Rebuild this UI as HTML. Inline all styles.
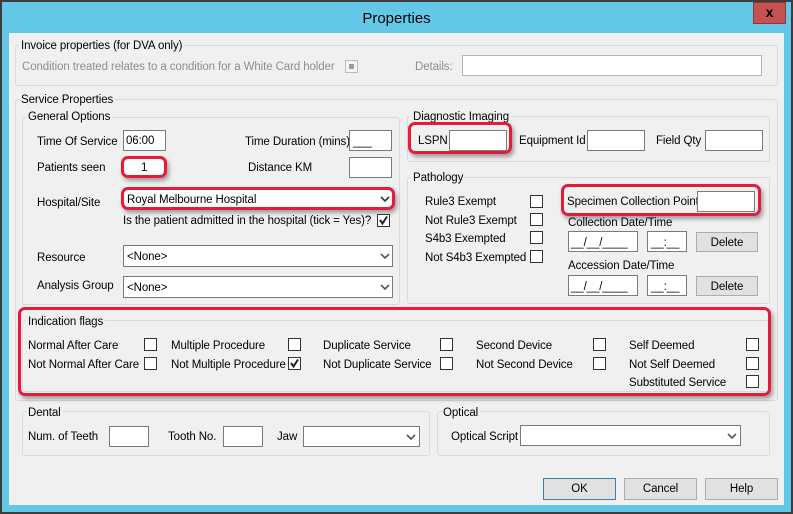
<!DOCTYPE html>
<html><head><meta charset="utf-8"><style>
*{margin:0;padding:0;box-sizing:border-box}
body{width:793px;height:514px;background:#3c3c3c;font-family:"Liberation Sans",sans-serif;font-size:11.5px;letter-spacing:-0.1px;color:#000;position:relative;overflow:hidden}
div{position:absolute}
.t{line-height:14px;white-space:nowrap;margin-top:1px}
.gray{color:#8d8d8d}
.i{background:#fff;border:1px solid #7a7a7a}
.cb{width:13px;height:13px;background:#fff;border:1px solid #333}
.g{border:1px solid #dadada;border-radius:3px}
.r{border:3px solid #e21c3a;border-radius:7px;box-shadow:2px 3px 4px rgba(0,0,0,.35)}
.btn{background:#e1e1e1;border:1px solid #adadad;text-align:center;line-height:20px}
.leg{background:#f0f0f0;padding:0 2px;line-height:14px}
svg{position:absolute}
</style></head><body>
<div style="left:2px;top:2px;width:789px;height:510px;background:#63c8e8"></div>
<div class="t" style="left:0;width:793px;top:9px;text-align:center;font-size:15px;line-height:18px;letter-spacing:0">Properties</div>
<div style="left:753px;top:2px;width:33px;height:22px;background:#c75050;border:1px solid #8a3a3a"></div>
<div class="t" style="left:753px;top:4px;width:33px;text-align:center;font-weight:bold;font-size:14px">x</div>
<div style="left:9px;top:33px;width:775px;height:472px;background:#f0f0f0"></div>

<!-- Invoice -->
<div class="g" style="left:15px;top:45px;width:763px;height:41px"></div>
<div class="t leg" style="left:19px;top:38px">Invoice properties (for DVA only)</div>
<div class="t gray" style="left:22px;top:59px">Condition treated relates to a condition for a White Card holder</div>
<div style="left:345px;top:60px;width:13px;height:13px;border:1px solid #bcbcbc;background:#f4f4f4"></div>
<div style="left:349px;top:64px;width:5px;height:5px;background:#9a9a9a"></div>
<div class="t gray" style="left:415px;top:59px">Details:</div>
<div class="i" style="left:462px;top:55px;width:300px;height:21px;border-color:#b4b4b4"></div>

<!-- Service properties -->
<div class="g" style="left:15px;top:99px;width:763px;height:302px"></div>
<div class="t leg" style="left:19px;top:92px">Service Properties</div>

<!-- General options -->
<div class="g" style="left:22px;top:117px;width:378px;height:188px"></div>
<div class="t leg" style="left:26px;top:109px">General Options</div>
<div class="t" style="left:37px;top:134px">Time Of Service</div>
<div class="i" style="left:123px;top:130px;width:43px;height:21px"></div>
<div class="t" style="left:126px;top:133px">06:00</div>
<div class="t" style="left:245px;top:134px">Time Duration (mins)</div>
<div class="i" style="left:349px;top:130px;width:43px;height:21px"></div>
<div class="t" style="left:353px;top:134px">___</div>
<div class="t" style="left:37px;top:160px">Patients seen</div>
<div class="r" style="left:121px;top:156px;width:46px;height:22px;background:#fff"></div>
<div class="t" style="left:141px;top:160px">1</div>
<div class="t" style="left:248px;top:160px">Distance KM</div>
<div class="i" style="left:349px;top:157px;width:43px;height:21px"></div>
<div class="t" style="left:37px;top:195px">Hospital/Site</div>
<div class="r" style="left:121px;top:187px;width:274px;height:23px;background:#fff"></div>
<div class="t" style="left:127px;top:192px">Royal Melbourne Hospital</div>
<svg style="left:380px;top:195px" width="10" height="8"><polyline points="1,2 5,6 9,2" fill="none" stroke="#333" stroke-width="1.6"/></svg>
<div class="t" style="left:123px;top:213px">Is the patient admitted in the hospital (tick = Yes)?</div>
<div class="cb" style="left:377px;top:214px"></div>
<svg style="left:377px;top:214px" width="13" height="13"><polyline points="3,6 5.5,9.5 10,2.5" fill="none" stroke="#222" stroke-width="2"/></svg>
<div class="t" style="left:37px;top:250px">Resource</div>
<div class="i" style="left:123px;top:245px;width:270px;height:22px"></div>
<div class="t" style="left:127px;top:249px">&lt;None&gt;</div>
<svg style="left:380px;top:252px" width="10" height="8"><polyline points="1,2 5,6 9,2" fill="none" stroke="#555" stroke-width="1.6"/></svg>
<div class="t" style="left:37px;top:278px">Analysis Group</div>
<div class="i" style="left:123px;top:276px;width:270px;height:22px"></div>
<div class="t" style="left:127px;top:280px">&lt;None&gt;</div>
<svg style="left:380px;top:283px" width="10" height="8"><polyline points="1,2 5,6 9,2" fill="none" stroke="#555" stroke-width="1.6"/></svg>

<!-- Diagnostic imaging -->
<div class="g" style="left:407px;top:116px;width:363px;height:46px"></div>
<div class="t leg" style="left:411px;top:109px">Diagnostic Imaging</div>
<div class="r" style="left:408px;top:122px;width:104px;height:32px"></div>
<div class="t" style="left:418px;top:133px">LSPN</div>
<div class="i" style="left:449px;top:130px;width:58px;height:21px"></div>
<div class="t" style="left:519px;top:133px">Equipment Id</div>
<div class="i" style="left:587px;top:130px;width:58px;height:21px"></div>
<div class="t" style="left:656px;top:133px">Field Qty</div>
<div class="i" style="left:705px;top:130px;width:58px;height:21px"></div>

<!-- Pathology -->
<div class="g" style="left:407px;top:177px;width:363px;height:127px"></div>
<div class="t leg" style="left:411px;top:170px">Pathology</div>
<div class="t" style="left:425px;top:194px">Rule3 Exempt</div><div class="cb" style="left:530px;top:195px"></div>
<div class="t" style="left:425px;top:213px">Not Rule3 Exempt</div><div class="cb" style="left:530px;top:213px"></div>
<div class="t" style="left:425px;top:231px">S4b3 Exempted</div><div class="cb" style="left:530px;top:231px"></div>
<div class="t" style="left:425px;top:250px">Not S4b3 Exempted</div><div class="cb" style="left:530px;top:250px"></div>
<div class="r" style="left:561px;top:184px;width:200px;height:32px"></div>
<div class="t" style="left:567px;top:194px">Specimen Collection Point</div>
<div class="i" style="left:697px;top:191px;width:58px;height:21px"></div>
<div class="t" style="left:568px;top:215px">Collection Date/Time</div>
<div class="i" style="left:568px;top:231px;width:70px;height:21px"></div>
<div class="t" style="left:571px;top:235px">__/__/____</div>
<div class="i" style="left:647px;top:231px;width:40px;height:21px"></div>
<div class="t" style="left:651px;top:235px">__:__</div>
<div class="btn" style="left:696px;top:232px;width:62px;height:20px">Delete</div>
<div class="t" style="left:568px;top:258px">Accession Date/Time</div>
<div class="i" style="left:568px;top:275px;width:70px;height:21px"></div>
<div class="t" style="left:571px;top:279px">__/__/____</div>
<div class="i" style="left:647px;top:275px;width:40px;height:21px"></div>
<div class="t" style="left:651px;top:279px">__:__</div>
<div class="btn" style="left:696px;top:276px;width:62px;height:20px">Delete</div>

<!-- Indication flags -->
<div class="g" style="left:22px;top:320px;width:748px;height:72px"></div>
<div class="r" style="left:18px;top:307px;width:753px;height:89px"></div>
<div class="t leg" style="left:26px;top:314px">Indication flags</div>
<div class="t" style="left:28px;top:338px">Normal After Care</div><div class="cb" style="left:144px;top:338px"></div>
<div class="t" style="left:28px;top:357px">Not Normal After Care</div><div class="cb" style="left:144px;top:357px"></div>
<div class="t" style="left:171px;top:338px">Multiple Procedure</div><div class="cb" style="left:288px;top:338px"></div>
<div class="t" style="left:171px;top:357px">Not Multiple Procedure</div><div class="cb" style="left:288px;top:357px"></div>
<svg style="left:288px;top:357px" width="13" height="13"><polyline points="3,6 5.5,9.5 10,2.5" fill="none" stroke="#222" stroke-width="2"/></svg>
<div class="t" style="left:323px;top:338px">Duplicate Service</div><div class="cb" style="left:440px;top:338px"></div>
<div class="t" style="left:323px;top:357px">Not Duplicate Service</div><div class="cb" style="left:440px;top:357px"></div>
<div class="t" style="left:476px;top:338px">Second Device</div><div class="cb" style="left:593px;top:338px"></div>
<div class="t" style="left:476px;top:357px">Not Second Device</div><div class="cb" style="left:593px;top:357px"></div>
<div class="t" style="left:629px;top:338px">Self Deemed</div><div class="cb" style="left:746px;top:338px"></div>
<div class="t" style="left:629px;top:357px">Not Self Deemed</div><div class="cb" style="left:746px;top:357px"></div>
<div class="t" style="left:629px;top:375px">Substituted Service</div><div class="cb" style="left:746px;top:375px"></div>

<!-- Dental -->
<div class="g" style="left:22px;top:411px;width:408px;height:45px"></div>
<div class="t leg" style="left:26px;top:405px">Dental</div>
<div class="t" style="left:28px;top:429px">Num. of Teeth</div>
<div class="i" style="left:109px;top:426px;width:40px;height:21px"></div>
<div class="t" style="left:168px;top:429px">Tooth No.</div>
<div class="i" style="left:223px;top:426px;width:40px;height:21px"></div>
<div class="t" style="left:277px;top:429px">Jaw</div>
<div class="i" style="left:303px;top:426px;width:117px;height:21px"></div>
<svg style="left:406px;top:433px" width="10" height="8"><polyline points="1,2 5,6 9,2" fill="none" stroke="#555" stroke-width="1.6"/></svg>

<!-- Optical -->
<div class="g" style="left:437px;top:411px;width:333px;height:45px"></div>
<div class="t leg" style="left:441px;top:405px">Optical</div>
<div class="t" style="left:451px;top:429px">Optical Script</div>
<div class="i" style="left:520px;top:425px;width:221px;height:21px"></div>
<svg style="left:727px;top:432px" width="10" height="8"><polyline points="1,2 5,6 9,2" fill="none" stroke="#555" stroke-width="1.6"/></svg>

<!-- Buttons -->
<div class="btn" style="left:543px;top:478px;width:73px;height:22px;border-color:#3c7fb1">OK</div>
<div class="btn" style="left:624px;top:478px;width:73px;height:22px">Cancel</div>
<div class="btn" style="left:705px;top:478px;width:73px;height:22px">Help</div>
</body></html>
